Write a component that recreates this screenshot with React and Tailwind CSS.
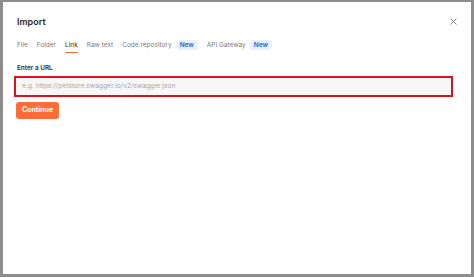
import React from 'react';

const tabs = [
    { label: 'File' },
    { label: 'Folder' },
    { label: 'Link', active: true },
    { label: 'Raw text' },
    { label: 'Code repository', badge: true },
    { label: 'API Gateway', badge: true },
];

const App = () => {
    return (
        <div className="h-[277px] w-[474px] bg-[#8d8d8d] pt-[2px] pl-[3px] font-['Inter',sans-serif]">
            {/* Modal */}
            <div className="h-[272px] w-[468px] bg-white pl-[14px] pr-[14px] pt-[13px]">
                {/* Header */}
                <div className="flex items-center justify-between h-[12px]">
                    <h1 className="text-[9px] font-semibold text-[#2b2b2b] leading-none">Import</h1>
                    <svg width="7" height="7" viewBox="0 0 7 7" className="text-[#7a7a7a]">
                        <path d="M0.5 0.5L6.5 6.5M6.5 0.5L0.5 6.5" stroke="currentColor" strokeWidth="0.9" />
                    </svg>
                </div>

                {/* Tabs */}
                <div className="relative flex items-center mt-[12px] h-[12px] text-[6.5px] text-[#7a7a7a]">
                    {tabs.map((t) => (
                        <div key={t.label} className="flex items-center gap-[4px] mr-[9px]">
                            <span className={`relative leading-none ${t.active ? 'text-[#2b2b2b]' : ''}`}>
                                {t.label}
                                {t.active && (
                                    <span className="absolute left-0 right-0 top-[10px] h-[1.5px] bg-[#ff6c37]" />
                                )}
                            </span>
                            {t.badge && (
                                <span className="bg-[#e9f1fc] text-[#1a5fd0] font-semibold px-[4px] py-[2px] rounded-[4px] leading-none">
                                    New
                                </span>
                            )}
                        </div>
                    ))}
                </div>

                {/* URL field */}
                <div className="mt-[13px] h-[8px] flex items-center text-[6.4px] font-semibold text-[#2b2b2b] leading-none">Enter a URL</div>
                <div className="mt-[4px] -ml-[3px] w-[439px] h-[21px] border-2 border-[#e0111d] bg-[#f7f7f7] flex items-center pl-[6px]">
                    <span className="text-[6.7px] text-[#a8a8a8] leading-none">e.g. https://petstore.swagger.io/v2/swagger.json</span>
                </div>

                <button className="mt-[5px] -ml-[1px] h-[17px] w-[43px] bg-[#ff6c37] text-white text-[7px] font-bold rounded-[3px] flex items-center justify-center">
                    Continue
                </button>
            </div>
        </div>
    );
};

export default App;
